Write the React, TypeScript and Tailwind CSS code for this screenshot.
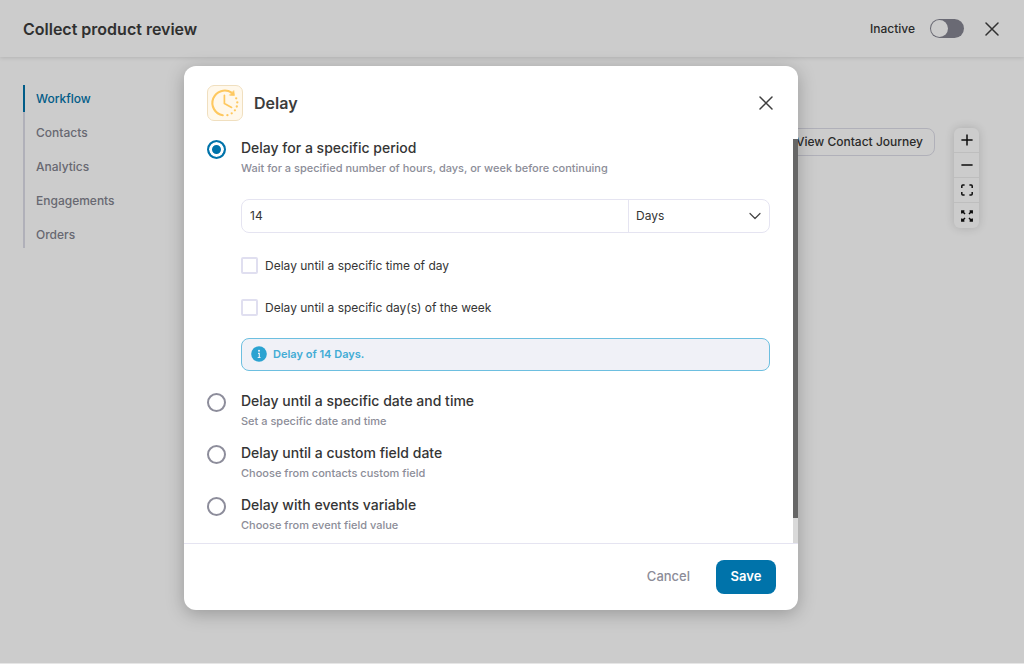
import { useState } from "react";
import type { ReactNode } from "react";

const navItems = ["Workflow", "Contacts", "Analytics", "Engagements", "Orders"];

function CloseIcon() {
  return (
    <svg viewBox="0 0 14 14" className="size-3.5" fill="none" stroke="#3f3f3f" strokeWidth="1.5" strokeLinecap="round">
      <path d="M1 1l12 12M13 1L1 13" />
    </svg>
  );
}

function DelayIcon() {
  return (
    <svg viewBox="0 0 36 36" className="size-9" fill="none" stroke="#fec85f" strokeWidth="2.1" strokeLinecap="round">
      <rect x="0.5" y="0.5" width="35" height="35" rx="6.5" fill="#fff8eb" stroke="#f0dfbf" strokeWidth="1" />
      <path d="M15.8 30.2A12.4 12.4 0 1 1 24.6 7.6" />
      <path d="M22.8 10.2l4.6.2-.6-4.4z" fill="#fec85f" strokeWidth="0.8" strokeLinejoin="round" />
      <path d="M17.4 10.3v8.3l7.2 3.8" strokeWidth="1.7" />
      <g fill="#fec85f" stroke="none">
        <circle cx="29.2" cy="13.3" r="1.15" />
        <circle cx="30.3" cy="17.4" r="1.15" />
        <circle cx="29.8" cy="21.5" r="1.15" />
        <circle cx="27.9" cy="25.3" r="1.15" />
        <circle cx="24.7" cy="28.3" r="1.15" />
        <circle cx="20.4" cy="30.2" r="1.15" />
      </g>
    </svg>
  );
}

function ToolButton({ label, children }: { label: string; children: ReactNode }) {
  return (
    <button type="button" aria-label={label} className="flex h-[25px] w-[25px] items-center justify-center">
      <svg viewBox="0 0 14 14" className="size-3.5" fill="none" stroke="#111" strokeWidth="1.5">
        {children}
      </svg>
    </button>
  );
}

type OptionProps = {
  id: string;
  title: string;
  hint: string;
  selected: string;
  onSelect: (id: string) => void;
  children?: ReactNode;
};

function Option({ id, title, hint, selected, onSelect, children }: OptionProps) {
  return (
    <div className="flex gap-[15px]">
      <input
        type="radio"
        id={id}
        name="delay"
        checked={selected === id}
        onChange={() => onSelect(id)}
        className="mt-px size-[19px] shrink-0 appearance-none rounded-full border-2 border-[#8d8d9b] bg-white checked:border-[#0073aa] checked:bg-[#0073aa] checked:shadow-[inset_0_0_0_3px_#fff]"
      />
      <div className="min-w-0 flex-1">
        <label htmlFor={id} className="block text-[14px] leading-[18px] font-medium text-[#353535]">
          {title}
        </label>
        <p className="mt-0.5 text-[11px] leading-[18px] font-medium text-[#8c8d98]">{hint}</p>
        {children}
      </div>
    </div>
  );
}

function Check({ id, text }: { id: string; text: string }) {
  return (
    <div className="flex h-[18px] items-center gap-[7px]">
      <input
        type="checkbox"
        id={id}
        className="size-[17px] appearance-none rounded-[2px] border-2 border-[#e0dff0] bg-white checked:bg-[#0073aa]"
      />
      <label htmlFor={id} className="text-[12px] leading-[18px] text-[#353535]">
        {text}
      </label>
    </div>
  );
}

function DelayDialog() {
  const [selected, setSelected] = useState("period");
  const [amount, setAmount] = useState("14");
  const [unit, setUnit] = useState("Days");
  return (
    <div
      role="dialog"
      aria-labelledby="dialog-title"
      className="flex w-full max-w-[614px] flex-col overflow-hidden rounded-xl bg-white shadow-[0_4px_18px_rgba(0,0,0,0.25)]"
    >
      <div className="flex items-center pt-[19px] pr-[25px] pb-[18px] pl-[23px]">
        <DelayIcon />
        <h2 id="dialog-title" className="ml-[11px] flex-1 text-[16px] leading-6 font-semibold text-[#3c3c3c]">
          Delay
        </h2>
        <button type="button" aria-label="Close dialog">
          <CloseIcon />
        </button>
      </div>
      <div className="flex h-[404px]">
        <div className="flex flex-1 flex-col gap-3.5 overflow-hidden pr-[23px] pl-[23px]">
          <Option id="period" title="Delay for a specific period" hint="Wait for a specified number of hours, days, or week before continuing" selected={selected} onSelect={setSelected}>
            <div className="mt-[22px] flex h-[34px] rounded-lg border border-[#e5e4f1] text-[12px] text-[#353535]">
              <input
                aria-label="Delay amount"
                value={amount}
                onChange={(e) => setAmount(e.target.value)}
                className="min-w-0 flex-1 rounded-l-lg px-2 outline-none"
              />
              <div className="relative flex w-[141px] items-center border-l border-[#e5e4f1]">
                <select
                  aria-label="Delay unit"
                  value={unit}
                  onChange={(e) => setUnit(e.target.value)}
                  className="h-full w-full appearance-none bg-transparent pr-7 pl-[7px] outline-none"
                >
                  <option>Hours</option>
                  <option>Days</option>
                  <option>Weeks</option>
                </select>
                <svg viewBox="0 0 12 8" className="pointer-events-none absolute right-2 h-2 w-3" fill="none" stroke="#444" strokeWidth="1.2" strokeLinecap="round" strokeLinejoin="round">
                  <path d="M1 1.5l5 5 5-5" />
                </svg>
              </div>
            </div>
            <div className="mt-6 flex flex-col gap-6">
              <Check id="time-of-day" text="Delay until a specific time of day" />
              <Check id="day-of-week" text="Delay until a specific day(s) of the week" />
            </div>
            <div className="mt-[21px] mb-[7px] flex h-[33px] items-center gap-1.5 rounded-lg border border-[#6dbfe0] bg-[#f0f1f7] px-[9px] text-[11px] font-semibold text-[#42acd5]">
              <svg viewBox="0 0 16 16" className="size-4">
                <circle cx="8" cy="8" r="7.8" fill="#2ba3d1" />
                <circle cx="8" cy="4.7" r="1" fill="#f0f1f7" />
                <path d="M7 7.4h1.3v4M6.7 11.5h2.8" fill="none" stroke="#f0f1f7" strokeWidth="1.1" />
              </svg>
              Delay of {amount} {unit}.
            </div>
          </Option>
          <Option id="date" title="Delay until a specific date and time" hint="Set a specific date and time" selected={selected} onSelect={setSelected} />
          <Option id="field" title="Delay until a custom field date" hint="Choose from contacts custom field" selected={selected} onSelect={setSelected} />
          <Option id="event" title="Delay with events variable" hint="Choose from event field value" selected={selected} onSelect={setSelected} />
        </div>
        <div aria-hidden="true" className="w-[5px] bg-[#d9d9d9]">
          <div className="h-[379px] bg-[#666]" />
        </div>
      </div>
      <div className="flex items-center justify-end gap-[26px] border-t border-[#e5e4f1] py-4 pr-[22px] text-[13px] font-medium">
        <button type="button" className="text-[#8c8c98]">
          Cancel
        </button>
        <button type="button" className="h-[34px] w-[60px] rounded-lg bg-[#0073aa] font-semibold text-white">
          Save
        </button>
      </div>
    </div>
  );
}

export default function App() {
  return (
    <div className="relative min-h-screen bg-white font-['Inter',sans-serif] text-[#353535]">
      <header className="flex h-[57px] items-center pr-[25px] pl-[23px] shadow-[0_1px_4px_rgba(0,0,0,0.12)]">
        <h1 className="flex-1 text-[16px] leading-6 font-semibold text-[#3c3c3c]">Collect product review</h1>
        <label htmlFor="active" className="text-[12px] font-medium">
          Inactive
        </label>
        <span className="ml-[15px] flex h-[19px] w-[34px] rounded-full bg-[#858591] p-px">
          <input id="active" type="checkbox" role="switch" className="size-[17px] appearance-none rounded-full bg-white" />
        </span>
        <button type="button" aria-label="Close" className="ml-[21px]">
          <CloseIcon />
        </button>
      </header>
      <div className="flex items-start justify-between pr-[45px] pl-[23px]">
        <nav className="mt-7 flex flex-col gap-[7px] text-[12px] font-medium shadow-[inset_2px_0_0_#dddde8]">
          {navItems.map((item, i) => (
            <a
              key={item}
              href={"#" + item.toLowerCase()}
              className={
                i === 0
                  ? "border-l-2 border-[#0073aa] pl-[11px] leading-[27px] text-[#0073aa]"
                  : "border-l-2 border-transparent pl-[11px] leading-[27px] text-[#82838e]"
              }
            >
              {item}
            </a>
          ))}
        </nav>
        <div className="mt-[71px] flex items-start gap-[19px]">
          <button type="button" className="h-7 rounded-lg border border-[#dddde8] pr-[11px] pl-3 text-[12px] font-medium">
            View Contact Journey
          </button>
          <div className="flex flex-col divide-y divide-[#eee] overflow-hidden rounded-md bg-white shadow-[0_0_10px_rgba(0,0,0,0.16)]">
            <ToolButton label="Zoom in">
              <path d="M7 1.4v11.2M1.4 7h11.2" />
            </ToolButton>
            <ToolButton label="Zoom out">
              <path d="M1.4 7h11.2" />
            </ToolButton>
            <ToolButton label="Fit view">
              <path d="M1.8 5V3Q1.8 2 2.8 2H4.6M9.4 2h1.8q1 0 1 1v2M12.2 9v2q0 1-1 1H9.4M4.6 12H2.8q-1 0-1-1V9" />
            </ToolButton>
            <ToolButton label="Full screen">
              <path d="M2 2l3 3M12 2L9 5M2 12l3-3M12 12L9 9M1.8 4.6V2h2.6M9.6 2h2.6v2.6M12.2 9.4V12H9.6M4.4 12H1.8V9.4" />
            </ToolButton>
          </div>
        </div>
      </div>
      <div className="absolute inset-0 flex items-center justify-center border-b border-white/50 bg-black/20 pt-3 pr-[42px]">
        <DelayDialog />
      </div>
    </div>
  );
}
